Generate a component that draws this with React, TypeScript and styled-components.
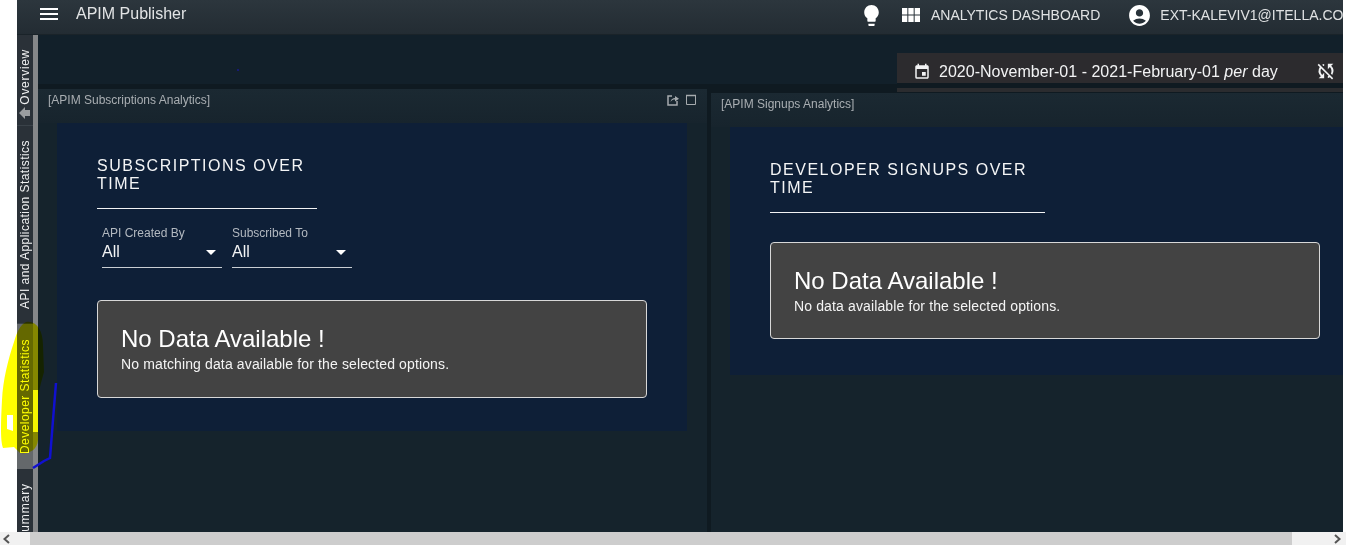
import React from "react";
import styled, { createGlobalStyle } from "styled-components";
import { MdLightbulb, MdViewModule, MdAccountCircle, MdEvent, MdSyncDisabled, MdMenu } from "react-icons/md";

const Global = createGlobalStyle`
  html, body { margin: 0; padding: 0; background: #fff; overflow: hidden; }
  * { box-sizing: border-box; }
  body { font-family: "Liberation Sans", Arial, sans-serif; }
`;

const Page = styled.div`
  position: relative;
  width: 1346px;
  height: 545px;
  display: flex;
  flex-direction: column;
  overflow: hidden;
  background: #fff;
`;
const Shell = styled.div`
  height: 532px;
  flex: none;
  margin: 0 3px 0 17px;
  display: flex;
  flex-direction: column;
  overflow: hidden;
`;
const TopBar = styled.header`
  height: 35px;
  flex: none;
  display: flex;
  align-items: center;
  padding: 0 0 6px 20px;
  background: linear-gradient(#2c363d, #232c33);
  border-bottom: 1px solid #1a2329;
  color: #e4e6e7;
  white-space: nowrap;
  overflow: hidden;
`;
const MenuIcon = styled(MdMenu)`
  flex: none;
  color: #fff;
`;
const Brand = styled.span`
  font-size: 16px;
  margin-left: 15px;
  color: #e2e4e5;
`;
const Spacer = styled.div`
  flex: 1;
`;
const TopItem = styled.div<{ $gap: number; $ml: number }>`
  display: flex;
  align-items: center;
  flex: none;
  gap: ${(p) => p.$gap}px;
  margin-left: ${(p) => p.$ml}px;
  font-size: 14px;
  color: #e0e2e3;
  svg { color: #fff; flex: none; }
`;
const TopRight = styled.div`
  display: flex;
  align-items: center;
  width: 484px;
  flex: none;
  margin-top: 2px;
  svg { flex: none; }
`;
const Body = styled.div`
  flex: 1;
  display: flex;
  min-height: 0;
`;
const Sidebar = styled.nav`
  width: 21px;
  flex: none;
  display: flex;
  flex-direction: column;
  background: #2a3138;
  border-right: 5px solid #858789;
  overflow: hidden;
`;
const Tab = styled.div<{ $active?: boolean; $h: number; $top?: boolean; $pb?: number }>`
  height: ${(p) => p.$h}px;
  flex: none;
  display: flex;
  flex-direction: column;
  align-items: center;
  justify-content: ${(p) => (p.$top ? "flex-start" : "flex-end")};
  gap: 2px;
  padding: 14px 0 ${(p) => p.$pb ?? 14}px;
  background: ${(p) => (p.$active ? "#64686b" : "transparent")};
  border-bottom: 1px solid ${(p) => (p.$active ? "#64686b" : "#3a4249")};
  color: ${(p) => (p.$active ? "#ffff66" : "#f0f1f2")};
`;
const TabLabel = styled.span<{ $ls?: number }>`
  writing-mode: vertical-rl;
  transform: rotate(180deg);
  font-size: 12px;
  letter-spacing: ${(p) => p.$ls ?? 0.45}px;
  white-space: nowrap;
  line-height: 16px;
  flex: none;
`;
const Content = styled.main`
  position: relative;
  flex: 1;
  min-width: 0;
  display: flex;
  flex-direction: column;
  background: #15222b;
  overflow: hidden;
`;
const TopStrip = styled.div`
  height: 54px;
  flex: none;
  background: #12202a;
  border-bottom: 5px solid #0f1a21;
`;
const DateBar = styled.div`
  position: absolute;
  top: 18px;
  left: 859px;
  right: 0;
  height: 39px;
  display: flex;
  align-items: flex-start;
  padding: 8px 6px 0 16px;
  background: linear-gradient(
    #2c2b2e 0 30px,
    #0f1a21 30px 35px,
    #2b2c2f 35px
  );
  color: #f2f3f4;
  font-size: 16px;
  line-height: 22px;
  white-space: nowrap;
  svg { flex: none; }
`;
const DateIcon = styled(MdEvent)`
  margin-top: 2px;
`;
const SyncIcon = styled(MdSyncDisabled)`
  margin-top: -1px;
`;
const DateText = styled.span`
  margin-left: 8px;
  flex: 1;
  letter-spacing: 0.02px;
  em { font-style: italic; }
`;
const Panels = styled.div`
  flex: 1;
  min-height: 0;
  display: flex;
  gap: 4px;
  background: #0f1a21;
`;
const Panel = styled.section<{ $w?: number; $top: number }>`
  ${(p) => (p.$w ? `width: ${p.$w}px; flex: none;` : "flex: 1; min-width: 0;")}
  margin-top: ${(p) => p.$top}px;
  display: flex;
  flex-direction: column;
  background: #15232c;
  overflow: hidden;
`;
const PanelHead = styled.div`
  height: 34px;
  flex: none;
  display: flex;
  align-items: center;
  padding: 0 11px 12px 10px;
  background: linear-gradient(#1b2932, #17242d);
  color: #a9aeb2;
  font-size: 12px;
  white-space: nowrap;
`;
const PanelActions = styled.div`
  display: flex;
  align-items: center;
  gap: 7px;
  margin-left: auto;
  color: #a6abae;
`;
const PanelIcon = styled.svg`
  height: 12px;
  flex: none;
`;
const PanelBody = styled.div<{ $l: number; $w: number; $h: number }>`
  margin-left: ${(p) => p.$l}px;
  width: ${(p) => p.$w}px;
  height: ${(p) => p.$h}px;
  flex: none;
  padding: 34px 40px 0;
  background: #0e1f37;
`;
const Title = styled.h2<{ $rule: number }>`
  margin: 0;
  width: ${(p) => p.$rule}px;
  height: 52px;
  font-weight: 400;
  font-size: 16px;
  line-height: 18px;
  letter-spacing: 1.5px;
  color: #f4f5f6;
  border-bottom: 1px solid #f2f3f4;
`;
const Filters = styled.div`
  display: flex;
  gap: 10px;
  padding: 17px 0 0 5px;
`;
const Filter = styled.div`
  width: 120px;
  height: 42px;
  border-bottom: 1px solid #c9ced3;
`;
const FilterLabel = styled.div`
  font-size: 12px;
  line-height: 14px;
  color: #b3b9c0;
`;
const FilterValue = styled.div`
  display: flex;
  justify-content: space-between;
  align-items: center;
  padding-right: 6px;
  margin-top: 3px;
  font-size: 16px;
  line-height: 18px;
  color: #f2f3f4;
`;
const Caret = styled.i`
  width: 0;
  height: 0;
  border-left: 5px solid transparent;
  border-right: 5px solid transparent;
  border-top: 5px solid #fff;
`;
const Alert = styled.div<{ $top: number; $h: number }>`
  width: 550px;
  height: ${(p) => p.$h}px;
  margin-top: ${(p) => p.$top}px;
  padding: 24px 23px 0 23px;
  background: #434343;
  border: 1px solid #d8d8d8;
  border-radius: 4px;
  color: #fff;
`;
const AlertTitle = styled.div`
  font-size: 24px;
  line-height: 28px;
`;
const AlertText = styled.div`
  font-size: 14px;
  line-height: 16px;
  margin-top: 3px;
  letter-spacing: 0.13px;
  color: #f4f4f4;
`;
const HScroll = styled.div`
  height: 13px;
  flex: none;
  display: flex;
  align-items: center;
  background: #f1f1f1;
`;
const ScrollThumb = styled.div`
  flex: 1;
  height: 13px;
  margin: 0 37px 0 13px;
  background: #cdcdcd;
`;
const Annotation = styled.svg`
  position: absolute;
  left: 0;
  top: 0;
  width: 1346px;
  height: 545px;
  pointer-events: none;
`;
const ScrollArrow = styled.svg`
  width: 17px;
  height: 12px;
  flex: none;
`;
const BackArrow = styled.svg`
  width: 12px;
  height: 12px;
  flex: none;
`;

export default function App() {
  return (
    <Page>
      <Global />
      <Shell>
        <TopBar>
          <MenuIcon size={24} />
          <Brand>APIM Publisher</Brand>
          <Spacer />
          <TopRight>
            <MdLightbulb size={25} color="#fff" />
            <TopItem $gap={8} $ml={15}>
              <MdViewModule size={24} />
              ANALYTICS DASHBOARD
            </TopItem>
            <TopItem $gap={8} $ml={27}>
              <MdAccountCircle size={25} />
              EXT-KALEVIV1@ITELLA.COM
            </TopItem>
          </TopRight>
        </TopBar>
        <Body>
          <Sidebar>
            <Tab $h={91} $pb={6}>
              <TabLabel $ls={0.7}>Overview</TabLabel>
              <BackArrow viewBox="0 0 12 12">
                <polygon points="0,6 6,0 6,3 11,3 11,9 6,9 6,12" fill="#9a9d9f" />
              </BackArrow>
            </Tab>
            <Tab $h={198}>
              <TabLabel>API and Application Statistics</TabLabel>
            </Tab>
            <Tab $h={145} $active>
              <TabLabel>Developer Statistics</TabLabel>
            </Tab>
            <Tab $h={90} $top>
              <TabLabel $ls={0.9}>Summary</TabLabel>
            </Tab>
          </Sidebar>
          <Content>
            <TopStrip />
            <DateBar>
              <DateIcon size={18} />
              <DateText>
                2020-November-01 - 2021-February-01 <em>per</em> day
              </DateText>
              <SyncIcon size={22} />
            </DateBar>
            <Panels>
              <Panel $w={669} $top={0}>
                <PanelHead>
                  [APIM Subscriptions Analytics]
                  <PanelActions>
                    <PanelIcon viewBox="0 0 12 12" width={12}>
                      <path d="M5 2 H1 V11 H10 V7" fill="none" stroke="currentColor" strokeWidth="1.5" />
                      <path d="M3.5 8 C4 5 6 4 8 4 V2 L12 4.8 L8 7.5 V5.6 C6 5.6 4.8 6.2 3.5 8 Z" fill="currentColor" />
                    </PanelIcon>
                    <PanelIcon viewBox="0 0 10 12" width={10}>
                      <path d="M0.5 1.5 H9.5 V10.5 H0.5 Z" fill="none" stroke="currentColor" strokeWidth="1" />
                      <path d="M0 1.5 H10" stroke="currentColor" strokeWidth="1.5" />
                    </PanelIcon>
                  </PanelActions>
                </PanelHead>
                <PanelBody $l={19} $w={630} $h={308}>
                  <Title $rule={220}>SUBSCRIPTIONS OVER TIME</Title>
                  <Filters>
                    <Filter>
                      <FilterLabel>API Created By</FilterLabel>
                      <FilterValue>All<Caret /></FilterValue>
                    </Filter>
                    <Filter>
                      <FilterLabel>Subscribed To</FilterLabel>
                      <FilterValue>All<Caret /></FilterValue>
                    </Filter>
                  </Filters>
                  <Alert $top={32} $h={98}>
                    <AlertTitle>No Data Available !</AlertTitle>
                    <AlertText>No matching data available for the selected options.</AlertText>
                  </Alert>
                </PanelBody>
              </Panel>
              <Panel $top={4}>
                <PanelHead>[APIM Signups Analytics]</PanelHead>
                <PanelBody $l={19} $w={620} $h={248}>
                  <Title $rule={275}>DEVELOPER SIGNUPS OVER TIME</Title>
                  <Alert $top={29} $h={97}>
                    <AlertTitle>No Data Available !</AlertTitle>
                    <AlertText>No data available for the selected options.</AlertText>
                  </Alert>
                </PanelBody>
              </Panel>
            </Panels>
          </Content>
        </Body>
      </Shell>
      <HScroll>
        <ScrollArrow viewBox="0 0 17 12">
          <path d="M9 2 L4.5 6 L9 10" fill="none" stroke="#555" strokeWidth="2" />
        </ScrollArrow>
        <ScrollThumb />
        <ScrollArrow viewBox="0 0 17 12">
          <path d="M6 2 L10.5 6 L6 10" fill="none" stroke="#555" strokeWidth="2" />
        </ScrollArrow>
      </HScroll>
      <Annotation viewBox="0 0 1346 545">
        <path
          fillRule="evenodd"
          style={{ mixBlendMode: "multiply" }}
          fill="#ffff00"
          d="M26 322 C36 320 43 330 43 345 L44 372 C42 380 39 388 38 400 L38 440 C37 450 30 454 20 453 L14 447 L3 448 C0 440 1 420 2 400 C3 380 8 360 14 342 C17 332 20 325 26 322 Z M7 415 L7 429 L13 431 L13 415 Z"
        />
        <rect x="33" y="390" width="5" height="42" fill="#f5f500" />
        <path d="M56 383 L53 420 L50 458 L44 461 L33 468" fill="none" stroke="#1010d0" strokeWidth="2.5" />
        <circle cx="238" cy="70" r="1" fill="#1a1a8c" />
      </Annotation>
    </Page>
  );
}
